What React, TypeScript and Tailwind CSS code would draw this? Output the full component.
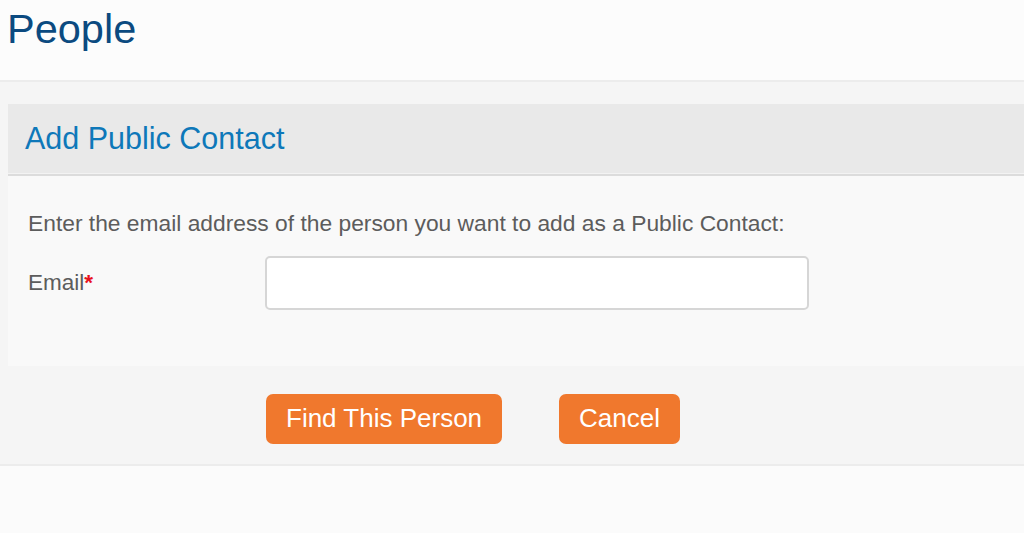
import React from "react";

export default function App() {
  return (
    <div className="min-h-[533px] bg-[#fbfbfb] font-['Liberation_Sans',Arial,sans-serif]">
      <header className="h-[80px] bg-[#fcfcfc] pl-[7px] pt-[5px]">
        <h1 className="text-[41.5px] leading-[48px] text-[#0b4a80]">People</h1>
      </header>
      <div className="h-[2px] bg-[#ececec]" />
      <main className="bg-[#f5f5f5] pt-[22px] pl-[8px]">
        <section>
          <div className="flex h-[69px] items-center bg-[#e9e9e9] pl-[17px]">
            <h2 className="text-[30.5px] leading-none text-[#0e78b9]">Add Public Contact</h2>
          </div>
          <div className="h-[1px] bg-[#f3f3f3]" />
          <div className="h-[2px] bg-[#dcdcdc]" />
          <div className="h-[190px] bg-[#f9f9f9] pl-[20px] pt-[34px]">
            <p className="text-[22.8px] leading-[26px] text-[#5c5c5c]">
              Enter the email address of the person you want to add as a Public Contact:
            </p>
            <div className="mt-[20px] flex items-center">
              <label className="w-[237px] text-[22.5px] leading-[26px] text-[#5c5c5c]">
                Email<span className="font-bold text-[#e8101c]">*</span>
              </label>
              <input
                type="text"
                className="h-[54px] w-[544px] rounded-[5px] border-2 border-[#d6d6d6] bg-white outline-none"
              />
            </div>
          </div>
        </section>
        <div className="flex h-[98px] items-center gap-[57px] pl-[258px] pt-[7px]">
          <button className="h-[50px] rounded-[7px] bg-[#f0782d] px-[20px] text-[26px] text-white">
            Find This Person
          </button>
          <button className="h-[50px] rounded-[7px] bg-[#f0782d] px-[20px] text-[26px] text-white">
            Cancel
          </button>
        </div>
      </main>
      <div className="h-[2px] bg-[#ececec]" />
    </div>
  );
}
